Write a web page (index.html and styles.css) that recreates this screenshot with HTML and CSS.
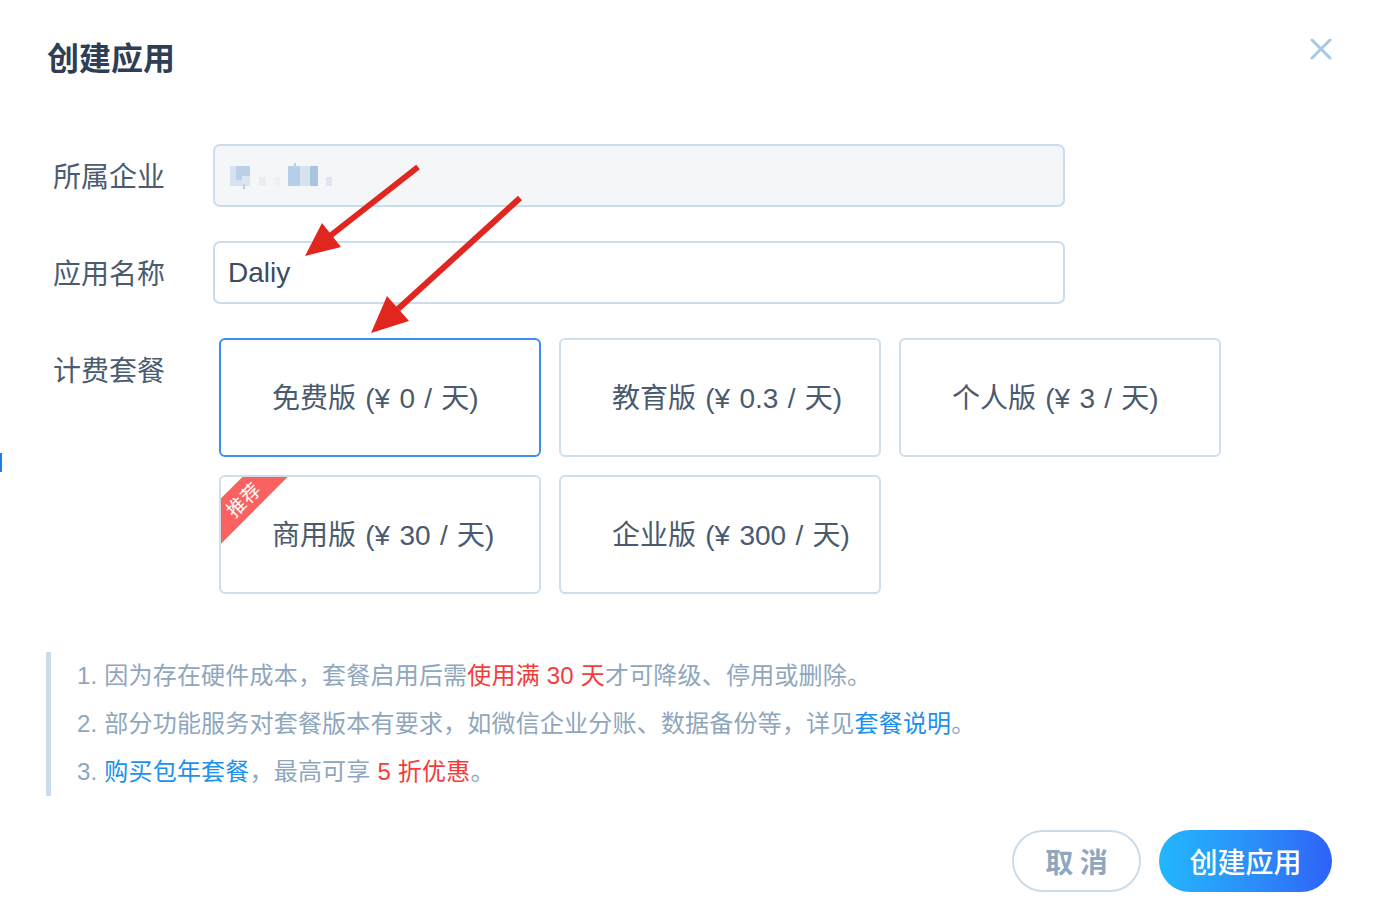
FILE: index.html
```html
<!DOCTYPE html>
<html lang="zh-CN">
<head>
<meta charset="utf-8">
<title>创建应用</title>
<link rel="stylesheet" href="styles.css">
</head>
<body>
<div class="dialog">
  <header class="head">
    <h1 class="title">创建应用</h1>
    <button class="close" aria-label="关闭">
      <svg width="22" height="22" viewBox="0 0 22 22"><path d="M2 2L20 20M20 2L2 20" stroke="#a9c8e2" stroke-width="3" stroke-linecap="round"/></svg>
    </button>
  </header>

  <div class="form">
    <div class="row">
      <label class="label">所属企业</label>
      <div class="input disabled">
        <svg class="blur" width="110" height="30" viewBox="0 0 110 30">
          <rect x="0" y="4" width="12" height="20" fill="#d6e3ef"/>
          <rect x="6" y="4" width="14" height="14" fill="#b9d0e6"/>
          <rect x="12" y="14" width="8" height="10" fill="#dbe6f1"/>
          <rect x="13" y="22" width="2" height="5" fill="#b9d0e6"/>
          <rect x="29" y="15" width="7" height="9" fill="#e6edf4"/>
          <rect x="44" y="15" width="6" height="9" fill="#edf1f6"/>
          <rect x="58" y="4" width="12" height="20" fill="#b7cfe6"/>
          <rect x="70" y="4" width="10" height="20" fill="#d7e4f0"/>
          <rect x="80" y="4" width="8" height="20" fill="#a9c5e1"/>
          <rect x="64" y="1" width="2" height="4" fill="#b7cfe6"/>
          <rect x="96" y="15" width="6" height="9" fill="#dce7f1"/>
        </svg>
      </div>
    </div>
    <div class="row">
      <label class="label">应用名称</label>
      <div class="input">Daliy</div>
    </div>
    <div class="row row-top">
      <label class="label">计费套餐</label>
      <div class="plans">
        <div class="plan selected">免费版 (¥ 0 / 天)</div>
        <div class="plan">教育版 (¥ 0.3 / 天)</div>
        <div class="plan">个人版 (¥ 3 / 天)</div>
        <div class="plan">
          <span class="ribbon">推荐</span>
          商用版 (¥ 30 / 天)
        </div>
        <div class="plan">企业版 (¥ 300 / 天)</div>
      </div>
    </div>
  </div>

  <ul class="notes">
    <li>1. 因为存在硬件成本，套餐启用后需<span class="red">使用满 30 天</span>才可降级、停用或删除。</li>
    <li>2. 部分功能服务对套餐版本有要求，如微信企业分账、数据备份等，详见<span class="blue">套餐说明</span>。</li>
    <li>3. <span class="blue">购买包年套餐</span>，最高可享 <span class="red">5 折优惠</span>。</li>
  </ul>

  <div class="actions">
    <button class="btn btn-cancel">取 消</button>
    <button class="btn btn-primary">创建应用</button>
  </div>
</div>

<svg class="annot" width="1376" height="922" viewBox="0 0 1376 922">
  <line x1="418" y1="167" x2="330" y2="236" stroke="#e1251f" stroke-width="6"/>
  <polygon points="305,256 341,247 322,223" fill="#e1251f"/>
  <line x1="520" y1="198" x2="398" y2="309" stroke="#e1251f" stroke-width="6"/>
  <polygon points="371,333 409,321 387,296" fill="#e1251f"/>
</svg>
<span class="edge-mark"></span>
</body>
</html>
```

FILE: styles.css
```css
* { box-sizing: border-box; }
html, body {
  margin: 0;
  padding: 0;
  background: #ffffff;
}
body {
  width: 1376px;
  height: 922px;
  overflow: hidden;
  position: relative;
  font-family: "Liberation Sans", "Noto Sans CJK SC", sans-serif;
  color: #4a5a6f;
}
.dialog {
  padding: 34px 44px 0 47px;
}
.head {
  display: flex;
  justify-content: space-between;
  align-items: flex-start;
  height: 44px;
}
.title {
  margin: 0;
  font-size: 32px;
  line-height: 44px;
  font-weight: 700;
  color: #2e3e54;
  font-family: "Noto Sans CJK SC", sans-serif;
}
.close {
  margin-top: 4px;
  padding: 0;
  border: 0;
  background: none;
  width: 22px;
  height: 22px;
  display: block;
}
.close svg { display: block; }

.form {
  margin-top: 66px;
  padding-left: 6px;
  display: flex;
  flex-direction: column;
  gap: 34px;
}
.row {
  display: flex;
  align-items: center;
}
.row-top { align-items: flex-start; }
.label {
  width: 160px;
  flex: none;
  font-size: 28px;
  line-height: 63px;
  color: #4b5b70;
  font-family: "Noto Sans CJK SC", sans-serif;
}
.input {
  width: 852px;
  height: 63px;
  border: 2px solid #cbdded;
  border-radius: 7px;
  padding: 0 13px;
  display: flex;
  align-items: center;
  font-size: 28px;
  color: #3d4b5f;
  background: #fff;
}
.input.disabled { background: #f5f6f7; padding-left: 15px; }
.blur { display: block; margin-top: 2px; }

.plans {
  margin-left: 6px;
  display: grid;
  grid-template-columns: repeat(3, 322px);
  grid-auto-rows: 119px;
  gap: 18px;
}
.plan {
  position: relative;
  overflow: hidden;
  border: 2px solid #cddeec;
  border-radius: 6px;
  display: flex;
  align-items: center;
  justify-content: flex-start;
  padding: 0 0 4px 51px;
  font-size: 28px;
  word-spacing: 1.5px;
  color: #4a5a6f;
}
.plan.selected { border-color: #3a8ff0; }
.ribbon {
  position: absolute;
  left: -40px;
  top: 6px;
  width: 124px;
  height: 32px;
  transform: rotate(-45deg);
  background: #fa6262;
  color: #fff;
  font-size: 19px;
  line-height: 32px;
  text-align: center;
  letter-spacing: 1px;
  word-spacing: 0;
  font-family: "Noto Sans CJK SC", sans-serif;
}

.notes {
  list-style: none;
  margin: 58px 0 0 -1px;
  padding: 0 0 0 26px;
  border-left: 5px solid #cadcec;
  font-size: 24px;
  letter-spacing: 0.2px;
  line-height: 48px;
  color: #8fa6bd;
}
.notes li { white-space: nowrap; }
.red { color: #f43d3a; }
.blue { color: #2090ef; }

.actions {
  margin-top: 34px;
  display: flex;
  justify-content: flex-end;
  gap: 18px;
}
.btn {
  height: 62px;
  border-radius: 31px;
  font-size: 28px;
  font-family: "Noto Sans CJK SC", sans-serif;
  font-weight: 700;
  padding: 0;
  cursor: pointer;
}
.btn-cancel {
  width: 129px;
  background: #fff;
  border: 2px solid #c9dcec;
  color: #8fa7bd;
}
.btn-primary {
  width: 173px;
  border: 0;
  color: #fff;
  font-weight: 500;
  background: linear-gradient(90deg, #23b7fd 0%, #2b8ef9 55%, #2f62f8 100%);
}

.annot {
  position: absolute;
  left: 0;
  top: 0;
  pointer-events: none;
}
.edge-mark {
  position: absolute;
  left: 0;
  top: 453px;
  width: 2px;
  height: 19px;
  background: #1a7fe8;
}
```
